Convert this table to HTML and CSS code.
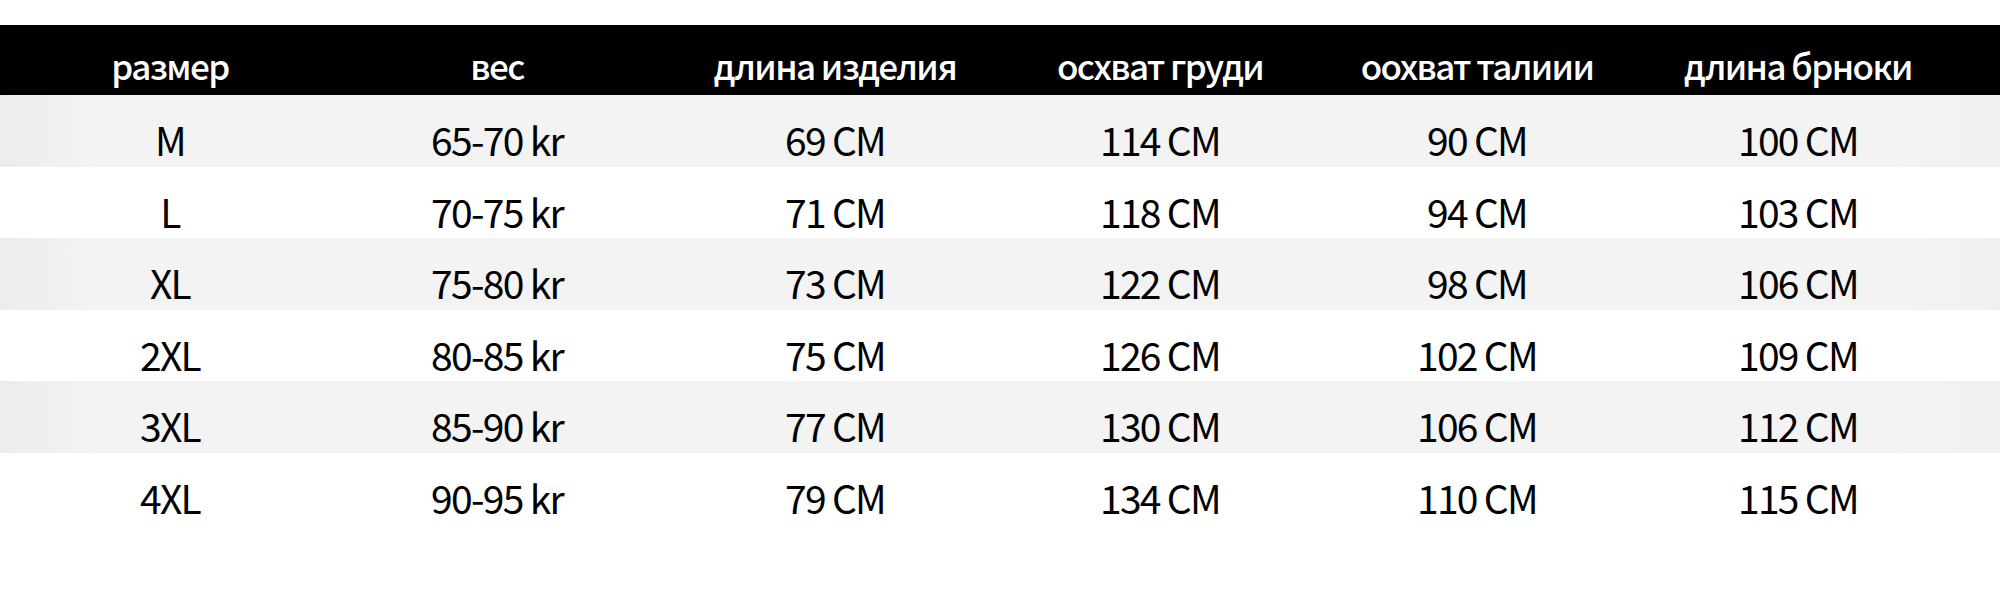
FILE: index.html
```html
<!DOCTYPE html>
<html lang="ru">
<head>
<meta charset="utf-8">
<title>Таблица размеров</title>
<link rel="stylesheet" href="styles.css">
</head>
<body>
<div class="page">
  <div class="table">
    <div class="row head">
      <div class="cell">размер</div>
      <div class="cell">вес</div>
      <div class="cell">длина изделия</div>
      <div class="cell">осхват груди</div>
      <div class="cell">оохват талиии</div>
      <div class="cell">длина брноки</div>
    </div>
    <div class="row shade">
      <div class="cell">M</div><div class="cell">65-70 kr</div><div class="cell">69 CM</div><div class="cell">114 CM</div><div class="cell">90 CM</div><div class="cell">100 CM</div>
    </div>
    <div class="row">
      <div class="cell">L</div><div class="cell">70-75 kr</div><div class="cell">71 CM</div><div class="cell">118 CM</div><div class="cell">94 CM</div><div class="cell">103 CM</div>
    </div>
    <div class="row shade">
      <div class="cell">XL</div><div class="cell">75-80 kr</div><div class="cell">73 CM</div><div class="cell">122 CM</div><div class="cell">98 CM</div><div class="cell">106 CM</div>
    </div>
    <div class="row">
      <div class="cell">2XL</div><div class="cell">80-85 kr</div><div class="cell">75 CM</div><div class="cell">126 CM</div><div class="cell">102 CM</div><div class="cell">109 CM</div>
    </div>
    <div class="row shade">
      <div class="cell">3XL</div><div class="cell">85-90 kr</div><div class="cell">77 CM</div><div class="cell">130 CM</div><div class="cell">106 CM</div><div class="cell">112 CM</div>
    </div>
    <div class="row">
      <div class="cell">4XL</div><div class="cell">90-95 kr</div><div class="cell">79 CM</div><div class="cell">134 CM</div><div class="cell">110 CM</div><div class="cell">115 CM</div>
    </div>
  </div>
</div>
</body>
</html>
```
FILE: styles.css
```css
html, body {
  margin: 0;
  padding: 0;
  background: #ffffff;
}
body {
  width: 2000px;
  height: 609px;
  overflow: hidden;
  font-family: "Noto Sans CJK SC", "Noto Sans", sans-serif;
  color: #000;
}
.page {
  padding-top: 25px;
}
.table {
  display: flex;
  flex-direction: column;
}
.row {
  display: grid;
  grid-template-columns: 340px 314px 362px 288px 346px 296px 1fr;
  height: 71.6px;
  align-items: start;
}
.row.head {
  height: 70px;
  background: #000;
  color: #fff;
}
.row.shade {
  background: linear-gradient(to right, #ececec 0px, #f3f3f3 90px, #f3f3f3 1900px, #f0f0f0 100%);
}
.cell {
  text-align: center;
  font-size: 39px;
  line-height: 38px;
  letter-spacing: -1.7px;
  padding-top: 25px;
  white-space: nowrap;
}
.head .cell {
  font-size: 35px;
  font-weight: 500;
  padding-top: 21px;
  letter-spacing: -1.6px;
}
```
